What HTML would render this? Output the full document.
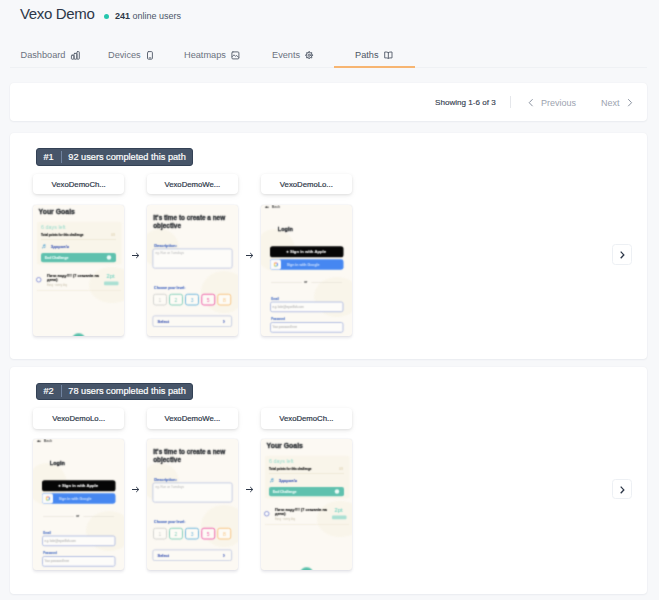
<!DOCTYPE html>
<html><head><meta charset="utf-8"><title>Vexo Demo</title>
<style>
*{box-sizing:border-box;margin:0;padding:0}
html,body{width:659px;height:600px;overflow:hidden;background:#f7f8fa;font-family:"Liberation Sans",sans-serif;color:#2d3748}
.abs{position:absolute}
.t{position:absolute;white-space:nowrap;line-height:1}
#title{left:20px;top:6px;font-size:15px;letter-spacing:-.35px;color:#2d3748}
#dot{left:104.1px;top:13.9px;width:5px;height:5px;border-radius:50%;background:#25c6ad}
#online{left:115px;top:12px;font-size:9px;color:#4a5568}
#online b{color:#2d3748}
.tab{position:absolute;top:44px;width:81px;height:24px;font-size:9.2px;color:#6b7280}
.tab span{position:absolute;top:7.4px;line-height:1;white-space:nowrap}
.tab svg{position:absolute;stroke:#58616f;fill:none;stroke-width:.95;stroke-linejoin:round;stroke-linecap:round}
.tab.active{color:#4b5563;border-bottom:2.1px solid #f7b571;z-index:2}
#tabline{left:10px;top:66.9px;width:637px;height:1.5px;background:#eff1f4}
.card{position:absolute;left:10px;width:637.3px;background:#fff;border-radius:4px;box-shadow:0 0 2px rgba(30,50,90,.05),0 1px 2px rgba(30,50,90,.05)}
.badge{position:absolute;left:35.8px;height:17.5px;width:157.2px;background:#475569;border:1px solid #334155;border-radius:3px;color:#fff;font-size:9.2px;-webkit-text-stroke:.2px #fff}
.lbl{position:absolute;width:90.7px;height:20.6px;background:#fff;border-radius:4px;box-shadow:0 1px 3px rgba(0,0,0,.1),0 2px 6px rgba(0,0,0,.05);font-size:7.75px;color:#2d3748;-webkit-text-stroke:.2px #2d3748;text-align:center;line-height:21.4px}
.thumb{position:absolute;width:90.8px;height:131.4px;background:#fcf9f3;border-radius:3px;box-shadow:0 1.5px 3px rgba(20,20,60,.1),0 0 1.5px rgba(20,20,60,.1);overflow:hidden}
.in{position:absolute;left:0;top:0;width:364px;height:532px;transform:scale(0.25);transform-origin:0 0}
.bl{position:absolute;left:0;top:-.5px;width:91px;height:133px;filter:url(#gb)}
.in i{position:absolute;display:block;font-style:normal}
.tt{position:absolute;white-space:nowrap;line-height:1;-webkit-text-stroke:.5px currentColor}
.blob{background:#f9f5ea;border-radius:50%}
.lv{top:355.2px;width:56px;height:47.2px;border:4.4px solid;border-radius:10.4px;background:#fdfbf6;font-size:20px;text-align:center;line-height:40px}
.arr{position:absolute;fill:none;stroke:#2d3748;stroke-width:1}
.nbtn{position:absolute;left:611.6px;width:20.4px;height:20.4px;background:#fff;border:1px solid #edf0f4;border-radius:3.5px}
.nbtn svg{fill:none;stroke:#2d3748;stroke-width:1.35;display:block}
</style></head><body>
<svg width="0" height="0" style="position:absolute"><defs><filter id="gb" x="0" y="0" width="100%" height="100%" color-interpolation-filters="sRGB"><feConvolveMatrix order="5" kernelMatrix="0.00003 0.00101 0.00331 0.00101 0.00003 0.00101 0.03529 0.11525 0.03529 0.00101 0.00331 0.11525 0.37636 0.11525 0.00331 0.00101 0.03529 0.11525 0.03529 0.00101 0.00003 0.00101 0.00331 0.00101 0.00003" edgeMode="duplicate" preserveAlpha="false"/></filter></defs></svg>
<div class="t" id="title">Vexo Demo</div>
<div class="abs" id="dot"></div>
<div class="t" id="online"><b>241</b> online users</div>

<div class="tab" style="left:10px"><span style="left:10.5px">Dashboard</span><svg style="left:60px;top:6px" width="12" height="12" viewBox="0 0 12 12"><rect x="1.4" y="5.2" width="2.6" height="4" rx=".7"/><rect x="4" y="3.4" width="2.9" height="5.8" rx=".7"/><rect x="6.9" y="1.6" width="2.4" height="7.6" rx=".7"/></svg></div>
<div class="tab" style="left:91px"><span style="left:17px">Devices</span><svg style="left:55px;top:6px" width="12" height="12" viewBox="0 0 12 12"><rect x="1.5" y="1.6" width="4.9" height="7.6" rx="1"/><path d="M3.2 7.9h1.6"/></svg></div>
<div class="tab" style="left:172px"><span style="left:12px">Heatmaps</span><svg style="left:58px;top:6px" width="12" height="12" viewBox="0 0 12 12"><rect x="1.9" y="1.9" width="7" height="7" rx="1"/><path d="M2.2 6.6l1.8-1.8 1.6 1.6 1-1 2 2"/></svg></div>
<div class="tab" style="left:253px"><span style="left:19px">Events</span><svg style="left:51px;top:6px" width="12" height="12" viewBox="0 0 12 12"><circle cx="5.2" cy="5.2" r="2.9"/><circle cx="5.2" cy="5.2" r="1.15"/><path d="M8.30 5.20L9.05 5.20M7.39 7.39L7.92 7.92M5.20 8.30L5.20 9.05M3.01 7.39L2.48 7.92M2.10 5.20L1.35 5.20M3.01 3.01L2.48 2.48M5.20 2.10L5.20 1.35M7.39 3.01L7.92 2.48" stroke-width="1.5" stroke-linecap="butt"/></svg></div>
<div class="tab active" style="left:334px"><span style="left:21px">Paths</span><svg style="left:49px;top:6px" width="12" height="12" viewBox="0 0 12 12"><path d="M5.35 2.5v5.8M5.35 2.5C4.5 2 3.2 1.9 1.700 2.000v5.900c1.500-.1 2.800 0 3.650.4.850-.4 2.150-.5 3.650-.4V2C7.500 1.900 6.200 2 5.350 2.500z"/></svg></div>
<div class="abs" id="tabline"></div>

<div class="card" style="top:83.3px;height:37.9px"></div>
<div class="t" style="left:435px;top:99.3px;font-size:8.1px;color:#374151;-webkit-text-stroke:.15px #374151">Showing 1-6 of 3</div>
<div class="abs" style="left:510px;top:96px;width:1px;height:12px;background:#e5e7eb"></div>
<div class="t" style="left:541px;top:99.2px;font-size:9px;color:#9ca3af">Previous</div>
<svg class="abs" style="left:526px;top:97px" width="10" height="12" viewBox="0 0 10 12"><path d="M6.6 2.2L3.200 5.700l3.400 3.500" fill="none" stroke="#8b93a1" stroke-width="1"/></svg>
<div class="t" style="left:601px;top:99.2px;font-size:9px;color:#9ca3af">Next</div>
<svg class="abs" style="left:625px;top:97px" width="10" height="12" viewBox="0 0 10 12"><path d="M3.2 2.2l3.400 3.500-3.400 3.500" fill="none" stroke="#8b93a1" stroke-width="1"/></svg>

<div class="card" style="top:132.7px;height:226.6px"></div>
<div class="badge" style="top:148.4px"><span class="t" style="left:6.6px;top:3.7px">#1</span><i class="abs" style="left:24px;top:1.8px;width:1px;height:11.8px;background:#7083a0"></i><span class="t" style="left:31.5px;top:3.7px">92 users completed this path</span></div>
<div class="lbl" style="left:33.3px;top:173.6px">VexoDemoCh...</div>
<div class="lbl" style="left:147px;top:173.6px">VexoDemoWe...</div>
<div class="lbl" style="left:261px;top:173.6px">VexoDemoLo...</div>
<div class="thumb" style="left:33.3px;top:205.1px"><div class="bl"><div class="in">
<i class="blob" style="left:224px;top:248px;width:184px;height:144px"></i>
<span class="tt" style="left:22.4px;top:14.4px;font-size:27.6px;font-weight:bold;color:#1f2328;-webkit-text-stroke:1.2px #1f2328">Your Goals</span>
<i class="bx" style="left:16.4px;top:66.8px;width:337.6px;height:171.2px;background:#f9f5ea;border-radius:8px"></i>
<span class="tt" style="left:32px;top:77.2px;font-size:21.6px;color:#9adccd;-webkit-text-stroke:0">6 days left</span>
<span class="tt" style="left:32px;top:113.2px;font-size:12px;font-weight:bold;color:#111">Total points for this challenge</span>
<span class="tt" style="left:312px;top:113.2px;font-size:12px;color:#e6dcc0">0/3</span>
<i class="bx" style="left:32px;top:138px;width:300px;height:2px;background:#e4dcc6"></i>
<span class="tt" style="left:32.8px;top:148.8px;font-size:25.6px;color:#4f9fd0">&#9836;</span><span class="tt" style="left:71.2px;top:157.6px;font-size:16px;font-weight:bold;color:#3a55b4">Здоров'я</span>
<i class="bx" style="left:32px;top:191.6px;width:300px;height:37.6px;background:#5fc1ae;border-radius:8px"></i>
<span class="tt" style="left:47.2px;top:203.2px;font-size:13.6px;font-weight:bold;color:#eafaf6">End Challenge</span>
<i class="bx" style="left:295.2px;top:201.2px;width:17.6px;height:17.6px;background:#eefbf8;border-radius:50%"></i>
<i class="bx" style="left:12.4px;top:288px;width:21.6px;height:21.6px;border:4px solid #8791d2;background:#fff;border-radius:50%"></i>
<span class="tt" style="left:56px;top:271.6px;font-size:15.4px;font-weight:bold;color:#111;line-height:18px">Пити воду!!!! (7 стаканів на<br>день)</span>
<span class="tt" style="left:56px;top:314.4px;font-size:10.8px;color:#d9d3c3">Easy · every day</span>
<span class="tt" style="left:294.4px;top:271.6px;font-size:22.8px;color:#7fd6c6">2pt</span>
<i class="bx" style="left:284px;top:306.4px;width:57.6px;height:14.4px;background:#a9e0d3;border-radius:4px"></i>
<i class="bx" style="left:16px;top:342.4px;width:336px;height:2px;background:#ece5d2"></i>
<i class="bx" style="left:155.2px;top:512.8px;width:54.4px;height:56px;background:#56bfa9;border-radius:50%"></i>
</div></div></div>
<div class="thumb" style="left:147px;top:205.1px"><div class="bl"><div class="in">
<i class="blob" style="left:-24px;top:96px;width:152px;height:152px"></i>
<i class="blob" style="left:216px;top:264px;width:184px;height:168px"></i>
<span class="tt" style="left:24.8px;top:35.6px;font-size:25.6px;font-weight:bold;color:#1f2328;line-height:32px;-webkit-text-stroke:1.2px #1f2328">It's time to create a new<br>objective</span>
<span class="tt" style="left:28.8px;top:154px;font-size:15.6px;font-weight:bold;color:#4668c0">Description:</span>
<i class="bx" style="left:22px;top:174.4px;width:320px;height:80px;background:#fdfcf9;border:3.6px solid #b3bcdc;border-radius:8.8px"></i>
<span class="tt" style="left:34.4px;top:184px;font-size:12px;color:#cfcfcf">eg. Run on Tuesdays</span>
<span class="tt" style="left:28.4px;top:323.2px;font-size:14px;font-weight:bold;color:#4668c0">Choose your level:</span>
<i class="lv" style="left:23.6px;border-color:#d3d3d0;color:#cfcfcc">1</i>
<i class="lv" style="left:88px;border-color:#85d0bb;color:#85d0bb">2</i>
<i class="lv" style="left:152.4px;border-color:#6fb6db;color:#6fb6db">3</i>
<i class="lv" style="left:216.8px;border-color:#ee62aa;color:#ee62aa">5</i>
<i class="lv" style="left:281.2px;border-color:#f8c583;color:#f8c583">8</i>
<i class="bx" style="left:22px;top:442.4px;width:318.4px;height:45.6px;background:#fcfaf5;border:3.6px solid #b8c0de;border-radius:8.8px"></i>
<span class="tt" style="left:42.4px;top:457.2px;font-size:15.6px;font-weight:bold;color:#4058b4">Select</span>
<span class="tt" style="left:303.2px;top:452.4px;font-size:28px;font-weight:bold;color:#5b70c0">&rsaquo;</span>
</div></div></div>
<div class="thumb" style="left:261px;top:205.1px"><div class="bl"><div class="in">
<i class="blob" style="left:-24px;top:96px;width:160px;height:168px"></i>
<i class="blob" style="left:212px;top:288px;width:184px;height:160px"></i>
<span class="tt" style="left:13.6px;top:-3.6px;font-size:20px;font-weight:bold;color:#222;-webkit-text-stroke:2px #222">&#8592;</span><span class="tt" style="left:43.2px;top:0.4px;font-size:14px;font-weight:bold;color:#5a5a5a;-webkit-text-stroke:0">Back</span>
<span class="tt" style="left:67.2px;top:84.8px;font-size:22px;font-weight:bold;color:#1f2328;-webkit-text-stroke:1.2px #1f2328">Login</span>
<i class="bx" style="left:36px;top:165.2px;width:294.4px;height:44px;background:#060606;border-radius:10.4px"></i>
<span class="tt" style="left:100.8px;top:178.4px;font-size:16.8px;font-weight:bold;color:#f2f2f2">&#9679; Sign in with Apple</span>
<i class="bx" style="left:36px;top:216.8px;width:294.4px;height:42.4px;background:#4687f1;border-radius:9.6px"></i>
<i class="bx" style="left:37.2px;top:218.4px;width:42.4px;height:39.2px;background:#fbfbfb;border-radius:8px"></i>
<i class="bx" style="left:49.6px;top:228.8px;width:18.4px;height:18.4px;border-radius:50%;border:4.4px solid;border-color:#ea4335 #4285f4 #34a853 #fbbc05"></i>
<span class="tt" style="left:103.2px;top:230.4px;font-size:14px;font-weight:bold;color:#b9d3fb">Sign in with Google</span>
<i class="bx" style="left:41.2px;top:308.8px;width:122px;height:2px;background:#dedad0"></i>
<span class="tt" style="left:172.8px;top:302.4px;font-size:12px;font-weight:bold;color:#555">or</span>
<i class="bx" style="left:201.6px;top:308.8px;width:122px;height:2px;background:#dedad0"></i>
<span class="tt" style="left:41.2px;top:368.8px;font-size:11.6px;font-weight:bold;color:#5074c6;-webkit-text-stroke:0.4px #5074c6">Email</span>
<i class="bx" style="left:36px;top:386px;width:294.4px;height:43.2px;background:#fdfcfa;border:4.4px solid #b4bfe2;border-radius:8.8px"></i>
<span class="tt" style="left:45.6px;top:402.4px;font-size:11.2px;color:#c4c4c4">e.g. latte@myselfish.com</span>
<span class="tt" style="left:41.2px;top:451.2px;font-size:11.6px;font-weight:bold;color:#5074c6;-webkit-text-stroke:0.4px #5074c6">Password</span>
<i class="bx" style="left:36px;top:467.6px;width:294.4px;height:43.2px;background:#fdfcfa;border:4.4px solid #b4bfe2;border-radius:8.8px"></i>
<span class="tt" style="left:45.6px;top:484px;font-size:11.2px;color:#c4c4c4">Your password here</span>
</div></div></div>
<svg class="arr" style="left:131px;top:251.6px" width="9" height="7" viewBox="0 0 9 7"><path d="M1 3.5h6.6M5.2 1l2.6 2.5L5.2 6"/></svg>
<svg class="arr" style="left:245px;top:251.6px" width="9" height="7" viewBox="0 0 9 7"><path d="M1 3.5h6.6M5.2 1l2.6 2.5L5.2 6"/></svg>
<div class="nbtn" style="top:244.4px"><svg width="18" height="18" viewBox="0 0 18 18"><path d="M7.7 6.6L10.8 9.9 7.7 13.2"/></svg></div>
<div class="card" style="top:367px;height:226.6px"></div>
<div class="badge" style="top:382.7px"><span class="t" style="left:6.6px;top:3.7px">#2</span><i class="abs" style="left:24px;top:1.8px;width:1px;height:11.8px;background:#7083a0"></i><span class="t" style="left:31.5px;top:3.7px">78 users completed this path</span></div>
<div class="lbl" style="left:33.3px;top:408.1px">VexoDemoLo...</div>
<div class="lbl" style="left:147px;top:408.1px">VexoDemoWe...</div>
<div class="lbl" style="left:261px;top:408.1px">VexoDemoCh...</div>
<div class="thumb" style="left:33.3px;top:439.0px"><div class="bl"><div class="in">
<i class="blob" style="left:-24px;top:96px;width:160px;height:168px"></i>
<i class="blob" style="left:212px;top:288px;width:184px;height:160px"></i>
<span class="tt" style="left:13.6px;top:-3.6px;font-size:20px;font-weight:bold;color:#222;-webkit-text-stroke:2px #222">&#8592;</span><span class="tt" style="left:43.2px;top:0.4px;font-size:14px;font-weight:bold;color:#5a5a5a;-webkit-text-stroke:0">Back</span>
<span class="tt" style="left:67.2px;top:84.8px;font-size:22px;font-weight:bold;color:#1f2328;-webkit-text-stroke:1.2px #1f2328">Login</span>
<i class="bx" style="left:36px;top:165.2px;width:294.4px;height:44px;background:#060606;border-radius:10.4px"></i>
<span class="tt" style="left:100.8px;top:178.4px;font-size:16.8px;font-weight:bold;color:#f2f2f2">&#9679; Sign in with Apple</span>
<i class="bx" style="left:36px;top:216.8px;width:294.4px;height:42.4px;background:#4687f1;border-radius:9.6px"></i>
<i class="bx" style="left:37.2px;top:218.4px;width:42.4px;height:39.2px;background:#fbfbfb;border-radius:8px"></i>
<i class="bx" style="left:49.6px;top:228.8px;width:18.4px;height:18.4px;border-radius:50%;border:4.4px solid;border-color:#ea4335 #4285f4 #34a853 #fbbc05"></i>
<span class="tt" style="left:103.2px;top:230.4px;font-size:14px;font-weight:bold;color:#b9d3fb">Sign in with Google</span>
<i class="bx" style="left:41.2px;top:308.8px;width:122px;height:2px;background:#dedad0"></i>
<span class="tt" style="left:172.8px;top:302.4px;font-size:12px;font-weight:bold;color:#555">or</span>
<i class="bx" style="left:201.6px;top:308.8px;width:122px;height:2px;background:#dedad0"></i>
<span class="tt" style="left:41.2px;top:368.8px;font-size:11.6px;font-weight:bold;color:#5074c6;-webkit-text-stroke:0.4px #5074c6">Email</span>
<i class="bx" style="left:36px;top:386px;width:294.4px;height:43.2px;background:#fdfcfa;border:4.4px solid #b4bfe2;border-radius:8.8px"></i>
<span class="tt" style="left:45.6px;top:402.4px;font-size:11.2px;color:#c4c4c4">e.g. latte@myselfish.com</span>
<span class="tt" style="left:41.2px;top:451.2px;font-size:11.6px;font-weight:bold;color:#5074c6;-webkit-text-stroke:0.4px #5074c6">Password</span>
<i class="bx" style="left:36px;top:467.6px;width:294.4px;height:43.2px;background:#fdfcfa;border:4.4px solid #b4bfe2;border-radius:8.8px"></i>
<span class="tt" style="left:45.6px;top:484px;font-size:11.2px;color:#c4c4c4">Your password here</span>
</div></div></div>
<div class="thumb" style="left:147px;top:439.0px"><div class="bl"><div class="in">
<i class="blob" style="left:-24px;top:96px;width:152px;height:152px"></i>
<i class="blob" style="left:216px;top:264px;width:184px;height:168px"></i>
<span class="tt" style="left:24.8px;top:35.6px;font-size:25.6px;font-weight:bold;color:#1f2328;line-height:32px;-webkit-text-stroke:1.2px #1f2328">It's time to create a new<br>objective</span>
<span class="tt" style="left:28.8px;top:154px;font-size:15.6px;font-weight:bold;color:#4668c0">Description:</span>
<i class="bx" style="left:22px;top:174.4px;width:320px;height:80px;background:#fdfcf9;border:3.6px solid #b3bcdc;border-radius:8.8px"></i>
<span class="tt" style="left:34.4px;top:184px;font-size:12px;color:#cfcfcf">eg. Run on Tuesdays</span>
<span class="tt" style="left:28.4px;top:323.2px;font-size:14px;font-weight:bold;color:#4668c0">Choose your level:</span>
<i class="lv" style="left:23.6px;border-color:#d3d3d0;color:#cfcfcc">1</i>
<i class="lv" style="left:88px;border-color:#85d0bb;color:#85d0bb">2</i>
<i class="lv" style="left:152.4px;border-color:#6fb6db;color:#6fb6db">3</i>
<i class="lv" style="left:216.8px;border-color:#ee62aa;color:#ee62aa">5</i>
<i class="lv" style="left:281.2px;border-color:#f8c583;color:#f8c583">8</i>
<i class="bx" style="left:22px;top:442.4px;width:318.4px;height:45.6px;background:#fcfaf5;border:3.6px solid #b8c0de;border-radius:8.8px"></i>
<span class="tt" style="left:42.4px;top:457.2px;font-size:15.6px;font-weight:bold;color:#4058b4">Select</span>
<span class="tt" style="left:303.2px;top:452.4px;font-size:28px;font-weight:bold;color:#5b70c0">&rsaquo;</span>
</div></div></div>
<div class="thumb" style="left:261px;top:439.0px"><div class="bl"><div class="in">
<i class="blob" style="left:224px;top:248px;width:184px;height:144px"></i>
<span class="tt" style="left:22.4px;top:14.4px;font-size:27.6px;font-weight:bold;color:#1f2328;-webkit-text-stroke:1.2px #1f2328">Your Goals</span>
<i class="bx" style="left:16.4px;top:66.8px;width:337.6px;height:171.2px;background:#f9f5ea;border-radius:8px"></i>
<span class="tt" style="left:32px;top:77.2px;font-size:21.6px;color:#9adccd;-webkit-text-stroke:0">6 days left</span>
<span class="tt" style="left:32px;top:113.2px;font-size:12px;font-weight:bold;color:#111">Total points for this challenge</span>
<span class="tt" style="left:312px;top:113.2px;font-size:12px;color:#e6dcc0">0/3</span>
<i class="bx" style="left:32px;top:138px;width:300px;height:2px;background:#e4dcc6"></i>
<span class="tt" style="left:32.8px;top:148.8px;font-size:25.6px;color:#4f9fd0">&#9836;</span><span class="tt" style="left:71.2px;top:157.6px;font-size:16px;font-weight:bold;color:#3a55b4">Здоров'я</span>
<i class="bx" style="left:32px;top:191.6px;width:300px;height:37.6px;background:#5fc1ae;border-radius:8px"></i>
<span class="tt" style="left:47.2px;top:203.2px;font-size:13.6px;font-weight:bold;color:#eafaf6">End Challenge</span>
<i class="bx" style="left:295.2px;top:201.2px;width:17.6px;height:17.6px;background:#eefbf8;border-radius:50%"></i>
<i class="bx" style="left:12.4px;top:288px;width:21.6px;height:21.6px;border:4px solid #8791d2;background:#fff;border-radius:50%"></i>
<span class="tt" style="left:56px;top:271.6px;font-size:15.4px;font-weight:bold;color:#111;line-height:18px">Пити воду!!!! (7 стаканів на<br>день)</span>
<span class="tt" style="left:56px;top:314.4px;font-size:10.8px;color:#d9d3c3">Easy · every day</span>
<span class="tt" style="left:294.4px;top:271.6px;font-size:22.8px;color:#7fd6c6">2pt</span>
<i class="bx" style="left:284px;top:306.4px;width:57.6px;height:14.4px;background:#a9e0d3;border-radius:4px"></i>
<i class="bx" style="left:16px;top:342.4px;width:336px;height:2px;background:#ece5d2"></i>
<i class="bx" style="left:155.2px;top:512.8px;width:54.4px;height:56px;background:#56bfa9;border-radius:50%"></i>
</div></div></div>
<svg class="arr" style="left:131px;top:485.9px" width="9" height="7" viewBox="0 0 9 7"><path d="M1 3.5h6.6M5.2 1l2.6 2.5L5.2 6"/></svg>
<svg class="arr" style="left:245px;top:485.9px" width="9" height="7" viewBox="0 0 9 7"><path d="M1 3.5h6.6M5.2 1l2.6 2.5L5.2 6"/></svg>
<div class="nbtn" style="top:478.7px"><svg width="18" height="18" viewBox="0 0 18 18"><path d="M7.7 6.6L10.8 9.9 7.7 13.2"/></svg></div>
</body></html>
